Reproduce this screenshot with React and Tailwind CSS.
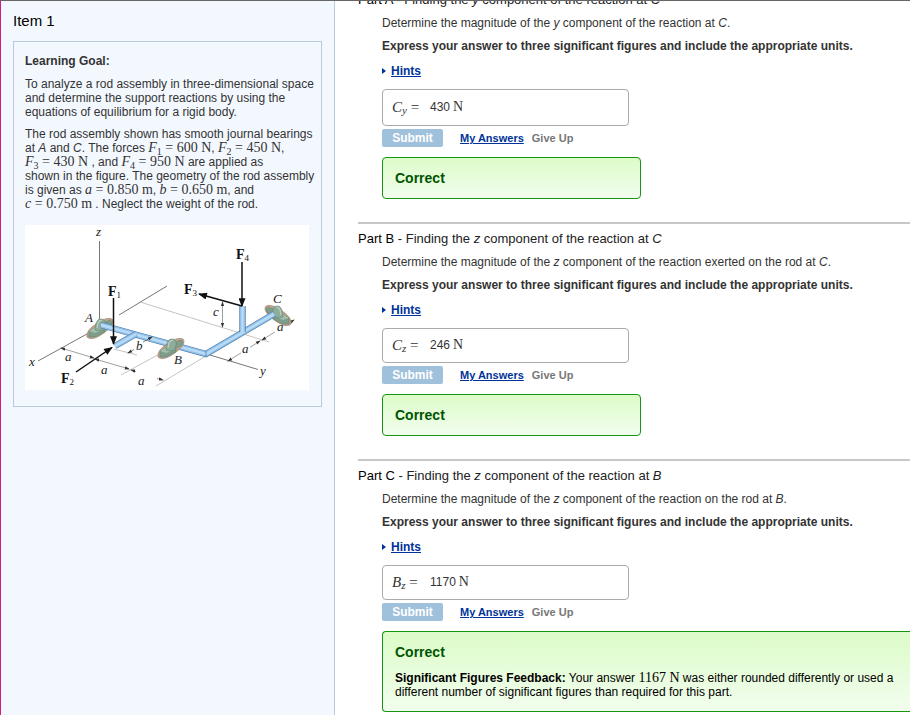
import { useState } from 'react';

const PARTS = [
  {
    id: 'A',
    symbol: 'C',
    axis: 'y',
    point: 'C',
    tail: 'of the reaction at',
    value: '430',
    boxClass: 'h-[37px]',
  },
  {
    id: 'B',
    symbol: 'C',
    axis: 'z',
    point: 'C',
    tail: 'of the reaction exerted on the rod at',
    value: '246',
    boxClass: 'h-[35px]',
  },
  {
    id: 'C',
    symbol: 'B',
    axis: 'z',
    point: 'B',
    tail: 'of the reaction on the rod at',
    value: '1170',
    boxClass: 'h-[35px]',
    feedback: '1167',
  },
];

function Tex({ children }) {
  return (
    <span className="font-['Liberation_Serif',serif] text-[14px] leading-[14px] whitespace-nowrap">{children}</span>
  );
}

function Quantity({ name, sub, value, unit }) {
  return (
    <Tex>
      <i>{name}</i>
      {sub && <sub className="text-[10px]">{sub}</sub>}
      {' = '}
      {value} {unit}
    </Tex>
  );
}

function Bearing({ x, y, flip }) {
  return (
    <g transform={`translate(${x} ${y}) scale(${flip ? -1 : 1} 1)`}>
      <path
        d="M-12 10 C-13 5 -8 0 -3 -3 C2 -7 9 -10 13 -8 C16 -5 12 1 6 5 C0 10 -8 14 -12 10Z"
        fill="#bfa48e"
        stroke="#a08069"
        strokeWidth="0.6"
      />
      <path d="M4 -4 L11 -7 L13 -5 L12 -2 L5 2Z" fill="#7f9f8c" stroke="#5f7d6d" strokeWidth="0.5" />
      <path d="M-10 4 L-3 0 L6 2 L6 5 L-4 10 L-10 10Z" fill="#7d9e8b" stroke="#5f7d6d" strokeWidth="0.5" />
      <path d="M-10 4 L-3 0 L6 2 L-4 6Z" fill="#a3bfae" />
      <path d="M-4 3 L-3 -4 Q-1 -9 3 -8 Q7 -7 6 -2 L5 3 L0 4Z" fill="#8dad9a" stroke="#5f7d6d" strokeWidth="0.5" />
      <path d="M-2 1 L-1 -4 Q0 -7 3 -7" fill="none" stroke="#bcd2c5" strokeWidth="1.2" />
    </g>
  );
}

function Rod({ d }) {
  return (
    <g fill="none">
      <path d={d} stroke="#4f7da6" strokeWidth="6.4" />
      <path d={d} stroke="#8fc0ea" strokeWidth="5" />
      <path d={d} stroke="#b9dbf6" strokeWidth="2.4" />
    </g>
  );
}

function RodFigure() {
  return (
    <svg
      viewBox="25 225 284 165"
      role="img"
      aria-label="Rod assembly with bearings A, B and C and forces F1 to F4"
      className="block w-full bg-white font-['Liberation_Serif',serif]"
    >
      <defs>
        <marker id="force" viewBox="0 0 10 8" refX="9" refY="4" markerWidth="10" markerHeight="7" markerUnits="userSpaceOnUse" orient="auto">
          <path d="M0 0 L10 4 L0 8Z" fill="#111" />
        </marker>
        <marker id="dim" viewBox="0 0 6 4" refX="5" refY="2" markerWidth="5" markerHeight="4" markerUnits="userSpaceOnUse" orient="auto-start-reverse">
          <path d="M0 0 L6 2 L0 4Z" fill="#333" />
        </marker>
      </defs>

      {/* axes */}
      <g stroke="#666" strokeWidth="0.9" fill="none">
        <path d="M99.5 241 V321" />
        <path d="M38 361 L96 329 M119 315 L167 286" />
        <path d="M210 355 L258 369.500" />
      </g>

      {/* extension lines */}
      <g stroke="#aaa" strokeWidth="0.7" fill="none">
        <path d="M140 302 L269 342" />
        <path d="M121 375 L163 352 M206 356 L156 386" />
        <path d="M114 349 L137 355" />
      </g>

      {/* dimensions */}
      <g stroke="#777" strokeWidth="0.7" fill="none">
        <path d="M61 348 L94 358" markerStart="url(#dim)" markerEnd="url(#dim)" />
        <path d="M95 359 L129 369" markerStart="url(#dim)" markerEnd="url(#dim)" />
        <path d="M131 370 L136 371.500" markerStart="url(#dim)" />
        <path d="M157 378.500 L163 380" markerEnd="url(#dim)" />
        <path d="M222.500 302 V327" markerStart="url(#dim)" markerEnd="url(#dim)" />
        <path d="M228 361 L260 341" markerStart="url(#dim)" markerEnd="url(#dim)" />
        <path d="M262 340 L294 320" markerStart="url(#dim)" markerEnd="url(#dim)" />
      </g>
      <g fill="#fff">
        <rect x="64" y="353" width="9" height="9" />
        <rect x="100" y="366" width="9" height="8" />
        <rect x="241" y="344" width="9" height="10" />
        <rect x="275" y="325" width="10" height="8" />
      </g>

      <Bearing x={99} y={327} />
      <Bearing x={279} y={314} flip />
      <Rod d="M101 325 L206 354 L274 314" />
      <Rod d="M242.500 306 V332" />
      <Rod d="M115 346 L136 334" />
      <path d="M206 351 V357" stroke="#4f7da6" strokeWidth="0.8" />
      <Bearing x={170} y={347} />
      <path d="M128 353 L134 349.500 M143 342 L152 337" stroke="#555" strokeWidth="0.8" markerStart="url(#dim)" markerEnd="url(#dim)" />

      {/* forces */}
      <g stroke="#111" strokeWidth="1.5" fill="none">
        <path d="M113.500 298 V344" markerEnd="url(#force)" />
        <path d="M76 372 L112 347.500" markerEnd="url(#force)" />
        <path d="M242 306 L199 294" markerEnd="url(#force)" />
        <path d="M242 262 V306" markerEnd="url(#force)" />
      </g>

      <g fill="#111" fontSize="14" fontWeight="bold">
        <text x="108" y="296">F<tspan fontSize="9" fontWeight="normal" dy="2">1</tspan></text>
        <text x="61" y="383">F<tspan fontSize="9" fontWeight="normal" dy="2">2</tspan></text>
        <text x="184" y="294">F<tspan fontSize="9" fontWeight="normal" dy="2">3</tspan></text>
        <text x="236" y="259">F<tspan fontSize="9" fontWeight="normal" dy="2">4</tspan></text>
      </g>
      <g fill="#222" fontSize="13" fontStyle="italic">
        <text x="96" y="236">z</text>
        <text x="29" y="366">x</text>
        <text x="260" y="375">y</text>
        <text x="85" y="322">A</text>
        <text x="174" y="364">B</text>
        <text x="273" y="303">C</text>
        <text x="65" y="361">a</text>
        <text x="101" y="374">a</text>
        <text x="138" y="385">a</text>
        <text x="242" y="353">a</text>
        <text x="277" y="331">a</text>
        <text x="136" y="350">b</text>
        <text x="213" y="316">c</text>
      </g>
    </svg>
  );
}

function Part({ part }) {
  const [answer, setAnswer] = useState(part.value);
  const inputId = `answer-${part.id}`;

  return (
    <section className="border-t-2 border-[#c8c8c8] pt-[5px]">
      <h2 className="text-[13px] leading-5 text-[#222]">
        <span className="text-black">Part {part.id}</span> - Finding the <i>{part.axis}</i> component of the reaction at <i>{part.point}</i>
      </h2>
      <div className="pl-6 pt-[5px] text-[12px] leading-4">
        <p>
          Determine the magnitude of the <i>{part.axis}</i> component {part.tail} <i>{part.point}</i>.
        </p>
        <p className="mt-[7px] font-bold">
          Express your answer to three significant figures and include the appropriate units.
        </p>
        <div className="mt-[9px] flex items-center gap-[5px]">
          <svg viewBox="0 0 4 6" className="h-[6px] w-1" aria-hidden="true">
            <path d="M0 0 L4 3 L0 6Z" fill="#003399" />
          </svg>
          <a href="#hints" className="font-bold text-[#003399] underline">Hints</a>
        </div>

        <div className={`mt-[10px] flex w-[247px] items-center rounded-[4px] border border-[#aaa] px-[9px] pb-[2px] ${part.boxClass}`}>
          <label htmlFor={inputId} className="w-[38px] font-['Liberation_Serif',serif] text-[15px]">
            <i>{part.symbol}</i>
            <sub className="text-[11px] italic">{part.axis}</sub> =
          </label>
          <input
            id={inputId}
            value={answer}
            onChange={(e) => setAnswer(e.target.value)}
            className="field-sizing-content outline-none"
          />
          <span className="pl-[3px] font-['Liberation_Serif',serif] text-[14px]">N</span>
        </div>

        <div className="mt-[3px] flex items-center text-[11px] font-bold">
          <button type="button" className="h-[18px] w-[61px] rounded-[2px] bg-[#9fc1dc] text-[12px] leading-4 text-white">
            Submit
          </button>
          <a href="#answers" className="ml-[17px] text-[#003399] underline">My Answers</a>
          <button type="button" className="ml-2 text-[#777]">Give Up</button>
        </div>

        <div
          className={`mt-[10px] rounded-[4px] border border-[#149614] bg-linear-to-b from-[#dcfcc8] to-[#f2fdee] px-3 py-3 ${
            part.feedback ? 'rounded-r-none border-r-0' : 'w-[259px]'
          }`}
        >
          <h3 className="text-[14px] leading-4 font-bold text-[#005500]">Correct</h3>
          {part.feedback && (
            <p className="mt-[11px] leading-[14px] text-black">
              <b>Significant Figures Feedback:</b> Your answer <Tex>{part.feedback} N</Tex> was either rounded
              differently or used a different number of significant figures than required for this part.
            </p>
          )}
        </div>
      </div>
    </section>
  );
}

export default function App() {
  return (
    <div className="flex h-screen overflow-hidden border-t border-[#666] bg-white font-['Liberation_Sans',Arial,sans-serif] text-[#333]">
      <aside className="w-[335px] shrink-0 border-r border-l border-r-[#b8cbdc] border-l-[#d81b7a] bg-[#f3f8ff] px-3 pt-[10px]">
        <h1 className="text-[15px] leading-5 text-black">Item 1</h1>
        <div className="mt-[10px] border border-[#b8cbdc] pt-[11px] pb-4 text-[12px] leading-[14px]">
          <div className="pr-[3px] pl-[11px]">
            <h2 className="leading-4 font-bold">Learning Goal:</h2>
            <p className="mt-2">
              To analyze a rod assembly in three-dimensional space
              <br />
              and determine the support reactions by using the
              <br />
              equations of equilibrium for a rigid body.
            </p>
            <p className="mt-2">
              The rod assembly shown has smooth journal bearings
              <br />
              at <i>A</i> and <i>C</i>. The forces <Quantity name="F" sub="1" value="600" unit="N" />,{' '}
              <Quantity name="F" sub="2" value="450" unit="N" />,
              <br />
              <Quantity name="F" sub="3" value="430" unit="N" /> , and{' '}
              <Quantity name="F" sub="4" value="950" unit="N" /> are applied as
              <br />
              shown in the figure. The geometry of the rod assembly
              <br />
              is given as <Quantity name="a" value="0.850" unit="m" />,{' '}
              <Quantity name="b" value="0.650" unit="m" />, and
              <br />
              <Quantity name="c" value="0.750" unit="m" /> . Neglect the weight of the rod.
            </p>
          </div>
          <div className="mt-[14px] pr-3 pl-[11px]">
            <RodFigure />
          </div>
        </div>
      </aside>

      <main className="min-w-0 flex-1 overflow-hidden pl-[23px]">
        <div className="-mt-[18px] flex flex-col gap-[23px]">
          {PARTS.map((part) => (
            <Part key={part.id} part={part} />
          ))}
        </div>
      </main>
    </div>
  );
}
